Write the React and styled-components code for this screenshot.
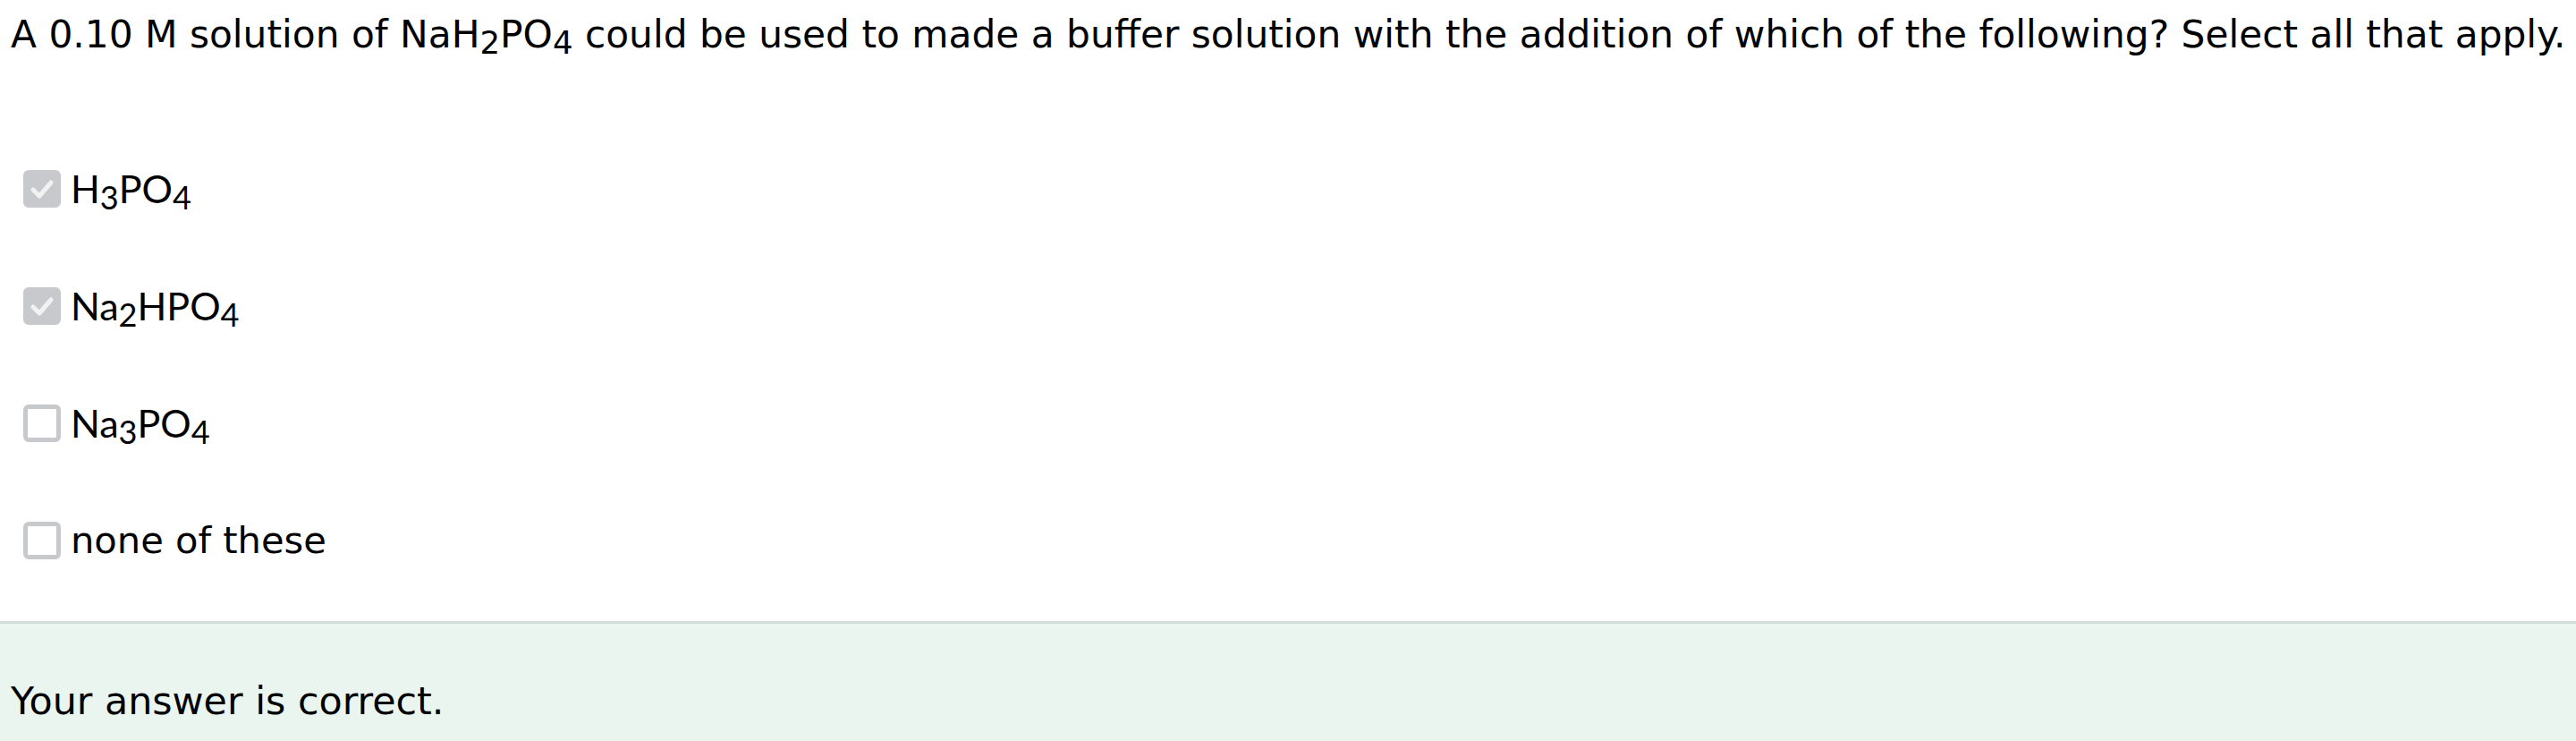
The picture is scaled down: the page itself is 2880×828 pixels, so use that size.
import React from "react";
import styled, { createGlobalStyle } from "styled-components";

const GlobalStyle = createGlobalStyle`
  html, body {
    margin: 0;
    padding: 0;
    background: #ffffff;
  }
  body {
    font-family: "DejaVu Sans", Verdana, sans-serif;
    color: #000;
  }
`;

const Page = styled.div`
  width: 2880px;
  height: 828px;
  display: flex;
  flex-direction: column;
  overflow: hidden;
`;

const Question = styled.p`
  margin: 0;
  padding: 14px 0 0 12px;
  font-size: 42.3px;
  line-height: 50px;
  white-space: nowrap;
`;

const Sub = styled.sub`
  font-size: 0.84em;
  line-height: 0;
  vertical-align: -0.2em;
`;

const Options = styled.ul`
  list-style: none;
  margin: 0;
  padding: 126px 0 0 26px;
  display: flex;
  flex-direction: column;
  gap: 89px;
`;

const Option = styled.li`
  display: flex;
  align-items: center;
  gap: 11px;
  height: 42px;
`;

const Box = styled.span`
  box-sizing: border-box;
  width: 42px;
  height: 42px;
  border-radius: 6px;
  border: 5px solid #c8c9cd;
  background: ${(p) => (p.$checked ? "#c8c9cd" : "#ffffff")};
  display: flex;
  align-items: center;
  justify-content: center;
  flex-shrink: 0;
`;

const Label = styled.span`
  font-family: ${(p) => (p.$formula ? "Lato, 'Open Sans', sans-serif" : "'DejaVu Sans', Verdana, sans-serif")};
  font-size: ${(p) => (p.$formula ? "43px" : "41.6px")};
  line-height: 42px;
  white-space: nowrap;
`;

const Feedback = styled.div`
  margin-top: auto;
  height: 131px;
  border-top: 3px solid #d3dcdc;
  background: #ebf5f0;
  box-sizing: content-box;
  padding: 0 12px;
  display: flex;
  align-items: flex-end;
`;

const FeedbackText = styled.p`
  margin: 0 0 20px;
  font-size: 42.8px;
  line-height: 50px;
`;

const Check = () => (
  <svg width="30" height="30" viewBox="0 0 30 30" fill="none">
    <path
      d="M5 16 L12 23 L25 8"
      stroke="#f2f2f3"
      strokeWidth="5"
      strokeLinecap="round"
      strokeLinejoin="round"
    />
  </svg>
);

const options = [
  { key: "h3po4", checked: true, formula: true, content: <>H<Sub>3</Sub>PO<Sub>4</Sub></> },
  { key: "na2hpo4", checked: true, formula: true, content: <>Na<Sub>2</Sub>HPO<Sub>4</Sub></> },
  { key: "na3po4", checked: false, formula: true, content: <>Na<Sub>3</Sub>PO<Sub>4</Sub></> },
  { key: "none", checked: false, formula: false, content: "none of these" },
];

export default function App() {
  return (
    <>
      <GlobalStyle />
      <Page>
        <Question>
          A 0.10 M solution of NaH<Sub>2</Sub>PO<Sub>4</Sub> could be used to made a buffer
          solution with the addition of which of the following? Select all that apply.
        </Question>
        <Options>
          {options.map((o) => (
            <Option key={o.key}>
              <Box $checked={o.checked}>{o.checked && <Check />}</Box>
              <Label $formula={o.formula}>{o.content}</Label>
            </Option>
          ))}
        </Options>
        <Feedback>
          <FeedbackText>Your answer is correct.</FeedbackText>
        </Feedback>
      </Page>
    </>
  );
}
